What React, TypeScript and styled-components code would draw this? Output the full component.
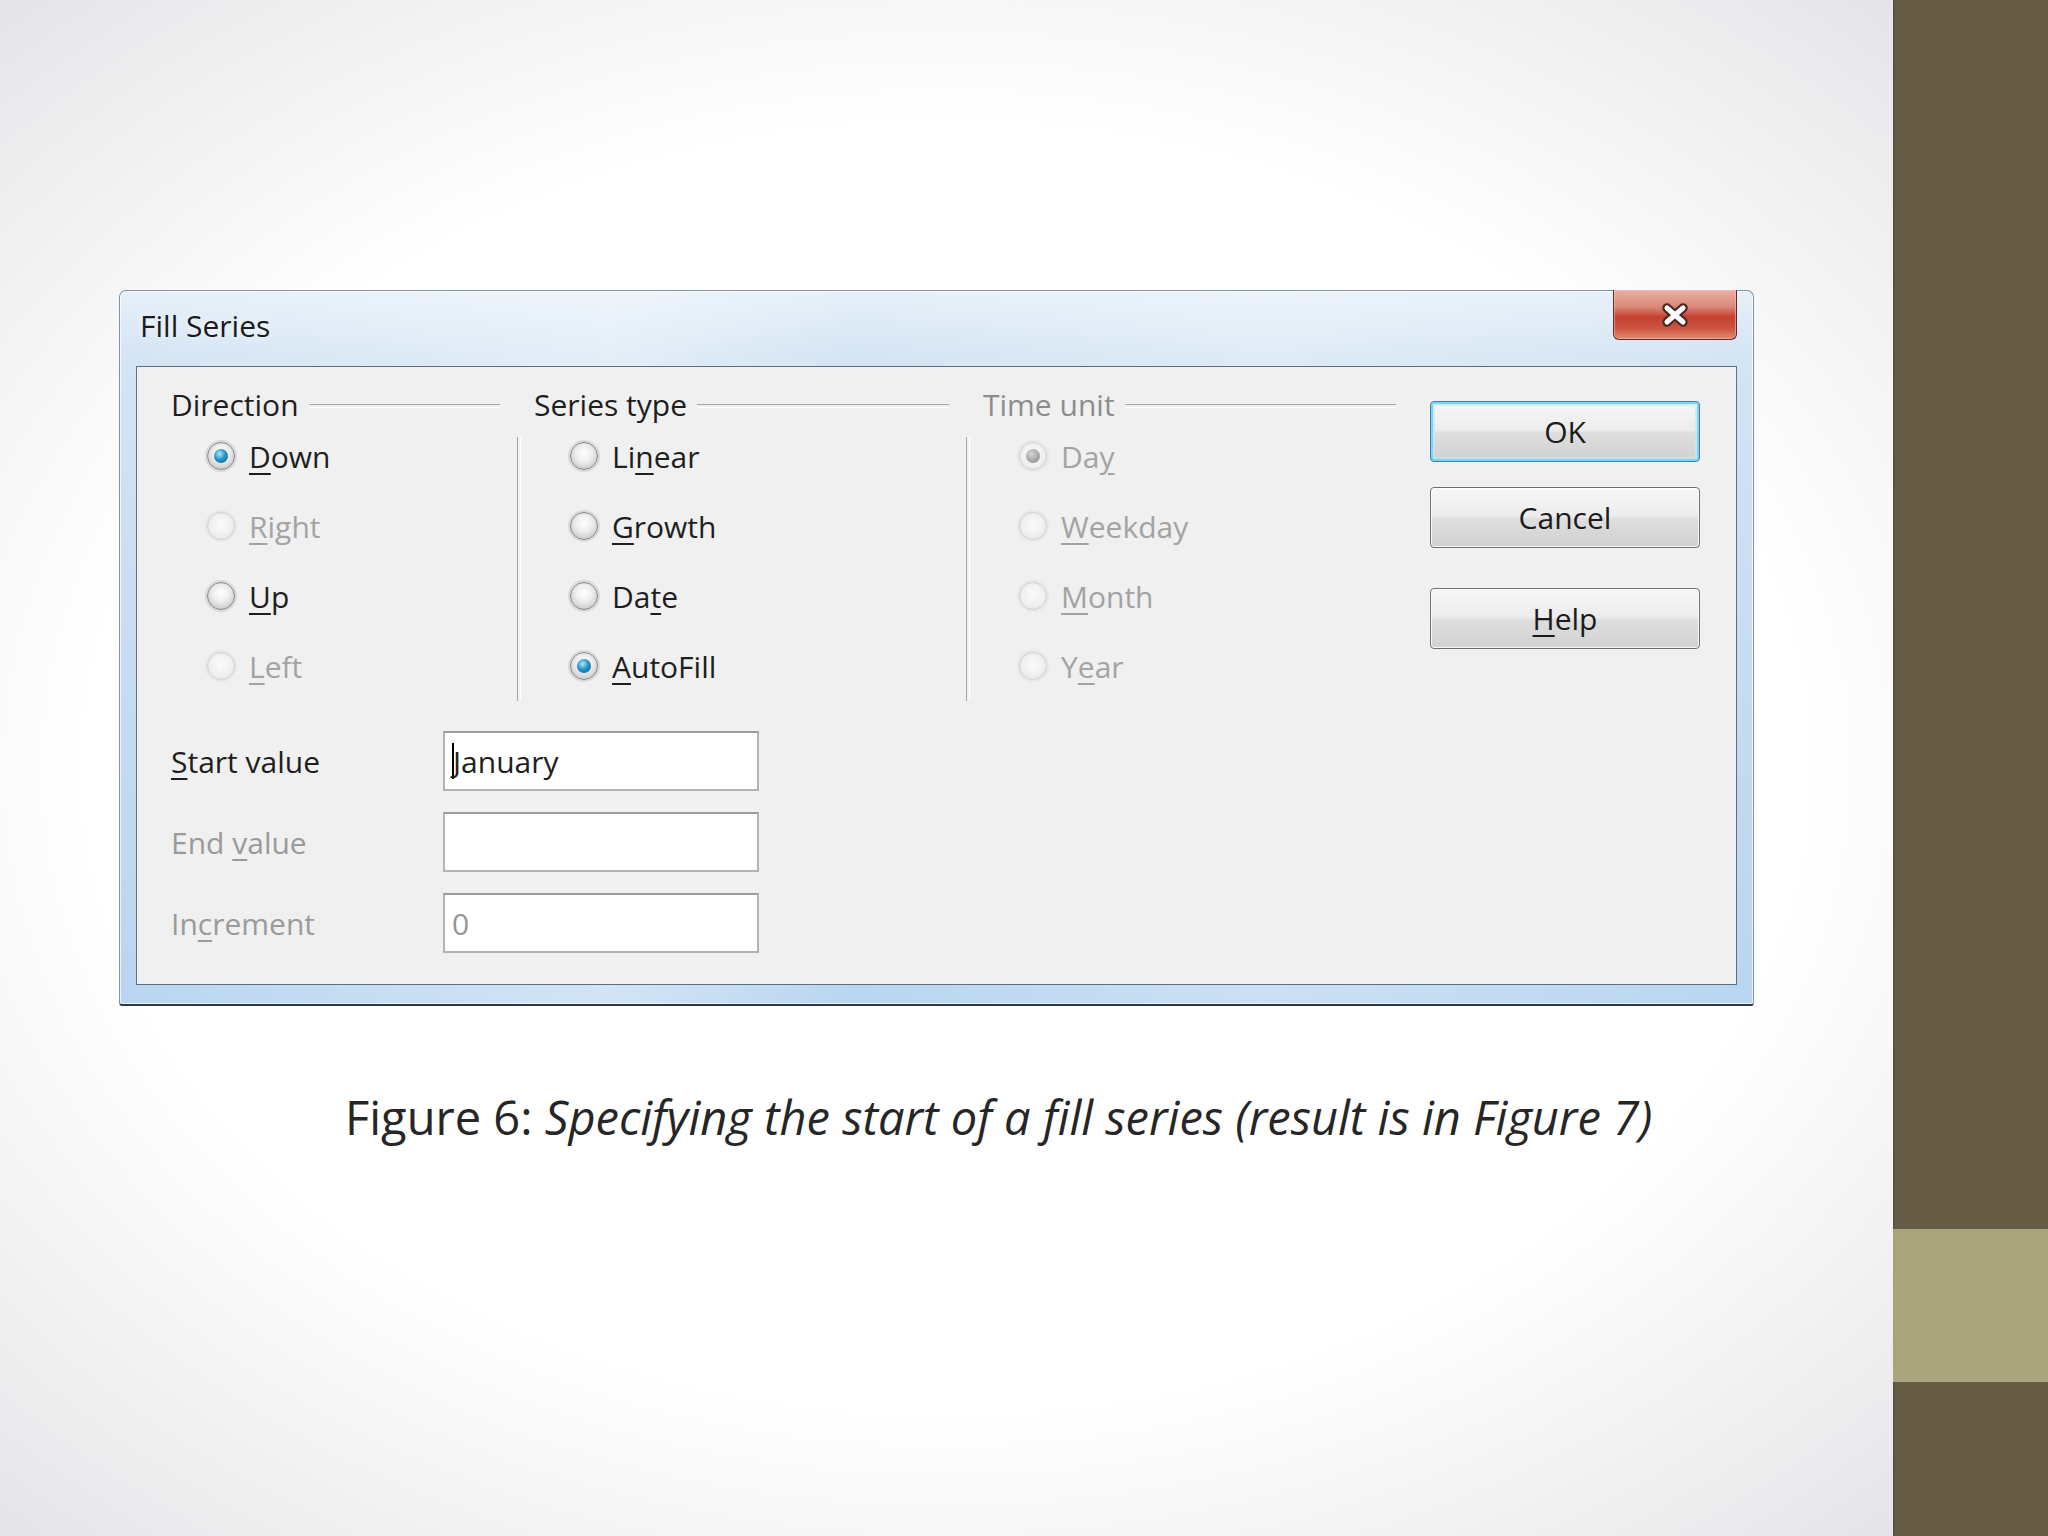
import React from 'react';
import styled, { createGlobalStyle, css } from 'styled-components';

const Global = createGlobalStyle`
  html, body { margin: 0; padding: 0; }
  body {
    width: 2048px;
    height: 1536px;
    overflow: hidden;
    font-family: "Open Sans", "Noto Sans", sans-serif;
  }
  * { box-sizing: border-box; }
`;

const Slide = styled.div`
  display: flex;
  width: 2048px;
  height: 1536px;
`;

const Stage = styled.main`
  flex: 1;
  display: flex;
  flex-direction: column;
  padding: 290px 0 0 119px;
  background: radial-gradient(ellipse 78% 72% at 50% 50%, #ffffff 58%, #ececee 85%, #e0e0e2 100%);
`;

const SideBar = styled.aside`
  width: 155px;
  display: flex;
  flex-direction: column;
  padding-top: 1229px;
  background: #675d47;
  border-left: 2px solid #5b5240;
`;

const SideBand = styled.div`
  height: 153px;
  margin-left: -2px;
  background: #aaa47c;
`;

const Window = styled.section`
  width: 1635px;
  height: 716px;
  display: flex;
  flex-direction: column;
  padding: 0 16px 19px 16px;
  border: 1px solid #8193a6;
  border-bottom: 2px solid #2e3842;
  border-radius: 7px 7px 3px 3px;
  background:
    linear-gradient(90deg, rgba(255,255,255,0) 0%, rgba(255,255,255,0.35) 30%, rgba(255,255,255,0) 45%, rgba(255,255,255,0.25) 70%, rgba(255,255,255,0) 100%),
    linear-gradient(180deg, #e6f0f9 0%, #d3e4f4 10%, #c6dcf0 55%, #b9d6f0 100%);
  box-shadow: inset 0 0 0 1px rgba(255, 255, 255, 0.7);
`;

const TitleBar = styled.header`
  height: 75px;
  display: flex;
  align-items: flex-start;
  justify-content: space-between;
  padding-left: 4px;
`;

const TitleText = styled.h1`
  margin: 15px 0 0 0;
  font-size: 30px;
  line-height: 40px;
  font-weight: 400;
  color: #1b1b1b;
  text-shadow: 0 0 8px rgba(255, 255, 255, 0.9);
`;

const CloseButton = styled.button`
  width: 124px;
  height: 50px;
  margin-top: -1px;
  display: flex;
  align-items: center;
  justify-content: center;
  padding: 0;
  border: 1px solid #5b2b24;
  border-top: none;
  border-radius: 0 0 6px 6px;
  background: linear-gradient(180deg, #eab0a3 0%, #dc8777 35%, #c4402f 55%, #cc5440 78%, #e28a72 100%);
  box-shadow: inset 0 0 0 1px rgba(255, 200, 190, 0.5);
`;

const Panel = styled.div`
  flex: 1;
  display: flex;
  flex-direction: column;
  padding: 18px 37px 0 34px;
  background: #f0f0f0;
  border: 1px solid #5f6f80;
`;

const TopRow = styled.div`
  display: grid;
  grid-template-columns: 329px 415px 413px 270px;
  column-gap: 34px;
  align-items: start;
`;

const Group = styled.div`
  display: flex;
  flex-direction: column;
`;

const GroupLabel = styled.div<{ $disabled?: boolean }>`
  display: flex;
  align-items: center;
  gap: 10px;
  height: 40px;
  font-size: 30px;
  line-height: 40px;
  color: ${(p) => (p.$disabled ? '#8c8c8c' : '#1e1e1e')};
  &::after {
    content: '';
    flex: 1;
    height: 2px;
    margin-top: 2px;
    border-top: 1px solid #a9a9a9;
    border-bottom: 1px solid #ffffff;
  }
`;

const RadioList = styled.div<{ $rule?: boolean }>`
  position: relative;
  margin-top: -4px;
  padding-left: 36px;
  display: flex;
  flex-direction: column;
  ${(p) =>
    p.$rule &&
    css`
      &::before {
        content: '';
        position: absolute;
        left: -17px;
        top: 16px;
        bottom: 0;
        width: 2px;
        border-left: 1px solid #a5a5a5;
        border-right: 1px solid #ffffff;
      }
    `}
`;

const RadioRow = styled.label<{ $disabled?: boolean }>`
  height: 70px;
  display: flex;
  align-items: center;
  gap: 14px;
  font-size: 30px;
  color: ${(p) => (p.$disabled ? '#a3a3a3' : '#1e1e1e')};
`;

const RadioCircle = styled.span<{ $checked?: boolean; $disabled?: boolean }>`
  width: 28px;
  height: 28px;
  flex: none;
  border-radius: 50%;
  display: flex;
  align-items: center;
  justify-content: center;
  border: 1px solid ${(p) => (p.$disabled ? '#cfcfcf' : '#858686')};
  background: ${(p) =>
    p.$disabled
      ? 'radial-gradient(circle at 50% 45%, #fbfbfb 0%, #f0f0f0 55%, #e0e0e0 100%)'
      : 'radial-gradient(circle at 50% 40%, #ffffff 0%, #eeeeee 40%, #cacaca 80%, #b5b5b5 100%)'};
  box-shadow: 0 0 0 2px ${(p) => (p.$disabled ? 'rgba(228,228,228,0.7)' : 'rgba(214,214,214,0.9)')};
  &::after {
    content: '';
    display: ${(p) => (p.$checked ? 'block' : 'none')};
    width: 14px;
    height: 14px;
    border-radius: 50%;
    background: ${(p) =>
      p.$disabled
        ? 'radial-gradient(circle at 40% 35%, #d6d6d6 0%, #a3a3a3 60%, #8a8a8a 100%)'
        : 'radial-gradient(circle at 40% 35%, #a8ecff 0%, #2b94c6 45%, #0d5a86 100%)'};
  }
`;

const Key = styled.span`
  text-decoration: underline;
  text-decoration-thickness: 2px;
  text-underline-offset: 5px;
`;

const ButtonColumn = styled.div`
  display: flex;
  flex-direction: column;
  margin-top: 16px;
`;

const PushButton = styled.button<{ $primary?: boolean; $gap?: number }>`
  width: 270px;
  height: 61px;
  margin-top: ${(p) => p.$gap ?? 0}px;
  padding: 0;
  font-family: "Open Sans", "Noto Sans", sans-serif;
  font-size: 30px;
  color: #1b1b1b;
  border-radius: 4px;
  border: 1px solid ${(p) => (p.$primary ? '#3c7fb1' : '#707070')};
  background: linear-gradient(180deg, #f6f6f6 0%, #ececec 48%, #dedede 52%, #d1d1d1 100%);
  box-shadow: ${(p) =>
    p.$primary
      ? 'inset 0 0 0 2px #7fd4f2, inset 0 0 0 4px rgba(190,235,250,0.6)'
      : 'inset 0 0 0 1px rgba(255,255,255,0.8)'};
`;

const FieldGrid = styled.div`
  display: grid;
  grid-template-columns: 272px 316px;
  row-gap: 21px;
  align-items: center;
  margin-top: 30px;
`;

const FieldLabel = styled.span<{ $disabled?: boolean }>`
  font-size: 30px;
  color: ${(p) => (p.$disabled ? '#9a9a9a' : '#1e1e1e')};
`;

const TextBox = styled.div<{ $muted?: boolean }>`
  height: 60px;
  display: flex;
  align-items: center;
  padding-left: 7px;
  font-size: 30px;
  color: ${(p) => (p.$muted ? '#959595' : '#1e1e1e')};
  background: #ffffff;
  border: 2px solid #b3b3b3;
  border-top-color: #9c9c9c;
`;

const Caret = styled.span`
  display: inline-block;
  width: 2px;
  height: 36px;
  margin-right: -1px;
  background: #000000;
`;

const Caption = styled.p`
  margin: 81px 0 0 226px;
  font-size: 47px;
  line-height: 60px;
  color: #262626;
  white-space: nowrap;
`;

const CaptionItalic = styled.em`
  font-style: italic;
`;

type RadioItem = { label: React.ReactNode; checked?: boolean; disabled?: boolean };

const RadioGroup: React.FC<{ title: string; items: RadioItem[]; rule?: boolean; disabled?: boolean }> = ({
  title,
  items,
  rule,
  disabled,
}) => (
  <Group>
    <GroupLabel $disabled={disabled}>{title}</GroupLabel>
    <RadioList $rule={rule}>
      {items.map((it, i) => (
        <RadioRow key={i} $disabled={it.disabled}>
          <RadioCircle $checked={it.checked} $disabled={it.disabled} />
          <span>{it.label}</span>
        </RadioRow>
      ))}
    </RadioList>
  </Group>
);

const CloseGlyph = () => (
  <svg width="34" height="28" viewBox="0 0 34 28">
    <path d="M9 7 L25 21 M25 7 L9 21" stroke="#4a2a25" strokeWidth="9.5" strokeLinecap="round" />
    <path d="M9 7 L25 21 M25 7 L9 21" stroke="#ffffff" strokeWidth="5" strokeLinecap="round" />
  </svg>
);

export default function App() {
  return (
    <>
      <Global />
      <Slide>
        <Stage>
          <Window>
            <TitleBar>
              <TitleText>Fill Series</TitleText>
              <CloseButton aria-label="Close">
                <CloseGlyph />
              </CloseButton>
            </TitleBar>
            <Panel>
              <TopRow>
                <RadioGroup
                  title="Direction"
                  items={[
                    { label: <><Key>D</Key>own</>, checked: true },
                    { label: <><Key>R</Key>ight</>, disabled: true },
                    { label: <><Key>U</Key>p</> },
                    { label: <><Key>L</Key>eft</>, disabled: true },
                  ]}
                />
                <RadioGroup
                  title="Series type"
                  rule
                  items={[
                    { label: <>Li<Key>n</Key>ear</> },
                    { label: <><Key>G</Key>rowth</> },
                    { label: <>Da<Key>t</Key>e</> },
                    { label: <><Key>A</Key>utoFill</>, checked: true },
                  ]}
                />
                <RadioGroup
                  title="Time unit"
                  rule
                  disabled
                  items={[
                    { label: <>Da<Key>y</Key></>, checked: true, disabled: true },
                    { label: <><Key>W</Key>eekday</>, disabled: true },
                    { label: <><Key>M</Key>onth</>, disabled: true },
                    { label: <>Y<Key>e</Key>ar</>, disabled: true },
                  ]}
                />
                <ButtonColumn>
                  <PushButton $primary>OK</PushButton>
                  <PushButton $gap={25}>Cancel</PushButton>
                  <PushButton $gap={40}>
                    <Key>H</Key>elp
                  </PushButton>
                </ButtonColumn>
              </TopRow>
              <FieldGrid>
                <FieldLabel>
                  <Key>S</Key>tart value
                </FieldLabel>
                <TextBox>
                  <Caret />
                  January
                </TextBox>
                <FieldLabel $disabled>
                  End <Key>v</Key>alue
                </FieldLabel>
                <TextBox />
                <FieldLabel $disabled>
                  In<Key>c</Key>rement
                </FieldLabel>
                <TextBox $muted>0</TextBox>
              </FieldGrid>
            </Panel>
          </Window>
          <Caption>
            Figure 6: <CaptionItalic>Specifying the start of a fill series (result is in Figure 7)</CaptionItalic>
          </Caption>
        </Stage>
        <SideBar>
          <SideBand />
        </SideBar>
      </Slide>
    </>
  );
}
